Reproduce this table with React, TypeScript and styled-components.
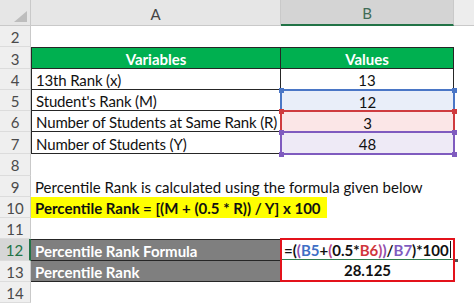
import React from "react";
import styled, { createGlobalStyle, css } from "styled-components";

const GlobalStyle = createGlobalStyle`
  html, body { margin: 0; padding: 0; background: #fff; overflow: hidden; }
  #root { width: 474px; height: 303px; }
`;

const FONT = `Lato, "Open Sans", "Liberation Sans", sans-serif`;
const LINE = "#262626";

type Place = { $row: number; $col: number; $span?: number; $rowSpan?: number };
const place = css<Place>`
  grid-row: ${(p) => p.$row} / span ${(p) => p.$rowSpan ?? 1};
  grid-column: ${(p) => p.$col} / span ${(p) => p.$span ?? 1};
`;

const Sheet = styled.div`
  display: grid;
  width: 474px;
  height: 303px;
  grid-template-columns: 31px 250px 173px 1fr;
  grid-template-rows: 26px repeat(13, 1fr);
  font-family: ${FONT};
  font-size: 15px;
  color: #111;
  background: #fff;
  overflow: hidden;
`;

const Corner = styled.div<Place>`
  ${place};
  position: relative;
  background: #e6e6e6;
  border-right: 1px solid #c9c9c9;
  border-bottom: 1px solid #c9c9c9;
  &::after {
    content: "";
    position: absolute;
    right: 3px;
    bottom: 3px;
    width: 0;
    height: 0;
    border-left: 13px solid transparent;
    border-bottom: 11px solid #bdbdbd;
  }
`;

const ColHeader = styled.div<Place & { $active?: boolean; $filler?: boolean }>`
  ${place};
  display: flex;
  align-items: center;
  justify-content: center;
  padding-top: 2px;
  background: ${(p) => (p.$active ? "#d4d4d4" : p.$filler ? "#ededed" : "#e6e6e6")};
  border-right: ${(p) => (p.$filler ? "none" : "1px solid #c9c9c9")};
  border-bottom: ${(p) => (p.$active ? "2px solid #217346" : "1px solid #c9c9c9")};
  color: ${(p) => (p.$active ? "#3f6b56" : "#444")};
  font-size: 15px;
`;

const RowHeader = styled.div<Place & { $active?: boolean }>`
  ${place};
  display: flex;
  align-items: center;
  justify-content: center;
  padding-top: 2px;
  background: ${(p) => (p.$active ? "#d6d6d6" : "#efefef")};
  border-bottom: 1px solid #dcdcdc;
  border-right: ${(p) => (p.$active ? "2px solid #217346" : "1px solid #c9c9c9")};
  color: ${(p) => (p.$active ? "#217346" : "#4a4a4a")};
  font-size: 15px;
`;

const Cell = styled.div<Place>`
  ${place};
  display: flex;
  align-items: center;
  padding: 2px 4px 0;
  white-space: nowrap;
  min-width: 0;
`;

const HeadCell = styled(Cell)<{ $first?: boolean }>`
  justify-content: center;
  background: #00b050;
  color: #fff;
  font-weight: 700;
  border-top: 1px solid ${LINE};
  border-bottom: 1px solid ${LINE};
  border-right: 1px solid ${LINE};
  border-left: ${(p) => (p.$first ? `1px solid ${LINE}` : "none")};
`;

const LabelCell = styled(Cell)`
  letter-spacing: -0.15px;
  border-left: 1px solid ${LINE};
  border-right: 1px solid ${LINE};
  border-bottom: 1px solid ${LINE};
`;

const ValueCell = styled(Cell)`
  justify-content: center;
  border-right: 1px solid ${LINE};
  border-bottom: 1px solid ${LINE};
`;

const tones = {
  blue: { line: "#4a76c6", fill: "#e9eef9" },
  red: { line: "#cf3b3f", fill: "#fbe6e7" },
  purple: { line: "#7f5bbf", fill: "#eeeaf6" },
};
type Tone = keyof typeof tones;

const RangeCell = styled(Cell)<{ $tone: Tone; $last?: boolean }>`
  position: relative;
  justify-content: center;
  background: ${(p) => tones[p.$tone].fill};
  border-top: 2px solid ${(p) => tones[p.$tone].line};
  border-left: 2px solid ${(p) => tones[p.$tone].line};
  border-right: 2px solid ${(p) => tones[p.$tone].line};
  border-bottom: ${(p) => (p.$last ? `2px solid ${tones[p.$tone].line}` : "none")};
  margin: -1px -1px ${(p) => (p.$last ? "-1px" : "0")} -1px;
`;

const Handle = styled.span<{ $tone: Tone; $x: "left" | "right"; $y: "top" | "bottom" }>`
  position: absolute;
  width: 5px;
  height: 5px;
  background: ${(p) => tones[p.$tone].line};
  ${(p) => p.$x}: -3.5px;
  ${(p) => p.$y}: -3.5px;
`;

const NoteCell = styled(Cell)`
  padding-left: 4px;
`;

const Highlight = styled.span`
  display: flex;
  align-items: center;
  align-self: stretch;
  margin: -2px 0 0 -4px;
  padding: 2px 6px 0 4px;
  background: #ffff00;
  font-weight: 700;
`;

const DarkCell = styled(Cell)<{ $top?: boolean }>`
  background: #7f7f7f;
  color: #fff;
  font-weight: 700;
  border-bottom: 1px solid ${LINE};
  border-top: ${(p) => (p.$top ? `1px solid ${LINE}` : "none")};
`;

const ResultBox = styled.div<Place>`
  ${place};
  position: relative;
  display: grid;
  grid-template-rows: 1fr 1fr;
  margin: -1px -1px 0 -1px;
  border: 2px solid #e3121b;
  font-weight: 700;
`;

const FormulaLine = styled.div`
  display: flex;
  align-items: center;
  padding: 1px 2px 0;
  border-bottom: 1px solid #2f7d4f;
  white-space: nowrap;
`;

const Caret = styled.span`
  display: inline-block;
  width: 1px;
  height: 17px;
  margin-left: 1px;
  background: #111;
`;

const ResultLine = styled.div`
  display: flex;
  align-items: center;
  justify-content: center;
  padding-top: 1px;
`;

const FillHandle = styled.span`
  position: absolute;
  right: -5px;
  top: 19px;
  width: 3px;
  height: 3px;
  background: #555;
`;

const Tok = styled.span<{ $c?: string }>`
  color: ${(p) => p.$c ?? "#111"};
`;

const formula: [string, string?][] = [
  ["=("],
  ["(", "#8a4fb0"],
  ["B5", "#3f6fc6"],
  ["+"],
  ["(", "#b0478f"],
  ["0.5*"],
  ["B6", "#d0363c"],
  [")", "#b0478f"],
  [")", "#8a4fb0"],
  ["/"],
  ["B7", "#7f5bbf"],
  [")*100"],
];

const rowsData: { label: string; value: string; tone?: Tone; last?: boolean }[] = [
  { label: "13th Rank (x)", value: "13" },
  { label: "Student's Rank (M)", value: "12", tone: "blue" },
  { label: "Number of Students at Same Rank (R)", value: "3", tone: "red" },
  { label: "Number of Students (Y)", value: "48", tone: "purple", last: true },
];

export default function App() {
  const rowNums = Array.from({ length: 13 }, (_, i) => i + 2);
  return (
    <>
      <GlobalStyle />
      <Sheet>
        <Corner $row={1} $col={1} />
        <ColHeader $row={1} $col={2}>A</ColHeader>
        <ColHeader $row={1} $col={3} $active>B</ColHeader>
        <ColHeader $row={1} $col={4} $filler />

        {rowNums.map((n) => (
          <RowHeader key={n} $row={n} $col={1} $active={n === 12}>
            {n}
          </RowHeader>
        ))}

        <HeadCell $row={3} $col={2} $first>Variables</HeadCell>
        <HeadCell $row={3} $col={3}>Values</HeadCell>

        {rowsData.map((r, i) => {
          const row = i + 4;
          return (
            <React.Fragment key={row}>
              <LabelCell $row={row} $col={2}>{r.label}</LabelCell>
              {r.tone ? (
                <RangeCell $row={row} $col={3} $tone={r.tone} $last={r.last}>
                  {r.value}
                  <Handle $tone={r.tone} $x="left" $y="top" />
                  <Handle $tone={r.tone} $x="right" $y="top" />
                  {r.last && <Handle $tone={r.tone} $x="left" $y="bottom" />}
                  {r.last && <Handle $tone={r.tone} $x="right" $y="bottom" />}
                </RangeCell>
              ) : (
                <ValueCell $row={row} $col={3}>{r.value}</ValueCell>
              )}
            </React.Fragment>
          );
        })}

        <NoteCell $row={9} $col={2} $span={3}>
          Percentile Rank is calculated using the formula given below
        </NoteCell>
        <NoteCell $row={10} $col={2} $span={3}>
          <Highlight>Percentile Rank = [(M + (0.5 * R)) / Y] x 100</Highlight>
        </NoteCell>

        <DarkCell $row={12} $col={2} $top>Percentile Rank Formula</DarkCell>
        <DarkCell $row={13} $col={2}>Percentile Rank</DarkCell>

        <ResultBox $row={12} $col={3} $rowSpan={2}>
          <FormulaLine>
            {formula.map(([t, c], i) => (
              <Tok key={i} $c={c}>{t}</Tok>
            ))}
            <Caret />
          </FormulaLine>
          <ResultLine>28.125</ResultLine>
          <FillHandle />
        </ResultBox>
      </Sheet>
    </>
  );
}
